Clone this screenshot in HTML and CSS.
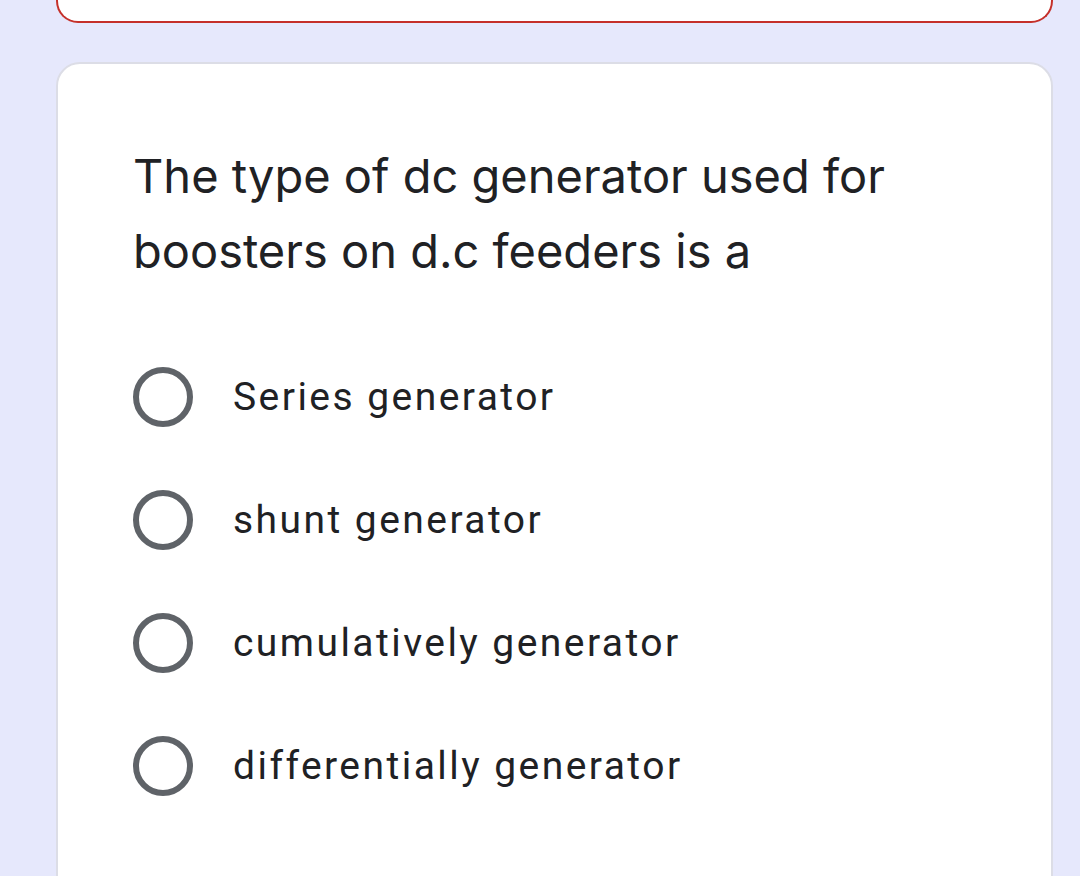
FILE: index.html
```html
<!DOCTYPE html>
<html>
<head>
<meta charset="utf-8">
<link rel="stylesheet" href="styles.css">
</head>
<body>
<div class="page">
  <div class="card card-prev"></div>
  <div class="card card-q">
    <div class="question">The type of dc generator used for boosters on d.c feeders is a</div>
    <div class="options">
      <div class="option"><span class="radio"></span><span class="label">Series generator</span></div>
      <div class="option"><span class="radio"></span><span class="label">shunt generator</span></div>
      <div class="option"><span class="radio"></span><span class="label">cumulatively generator</span></div>
      <div class="option"><span class="radio"></span><span class="label">differentially generator</span></div>
    </div>
  </div>
</div>
</body>
</html>
```
FILE: styles.css
```css
html, body {
  margin: 0;
  padding: 0;
  background: #e6e8fc;
  height: 100%;
  overflow: hidden;
}
.page {
  padding: 0 27px 0 56px;
}
.card {
  background: #fff;
  box-sizing: border-box;
}
.card-prev {
  height: 23px;
  border: 2px solid #c5302a;
  border-top: none;
  border-radius: 0 0 22px 22px;
}
.card-q {
  margin-top: 39px;
  border: 2px solid #dcdde6;
  border-radius: 24px;
  height: 840px;
  padding: 74px 60px 0 75px;
}
.question {
  font-family: Inter, "Noto Sans", sans-serif;
  font-size: 47px;
  line-height: 75px;
  color: #202124;
  width: 820px;
}
.options {
  margin-top: 79px;
  display: flex;
  flex-direction: column;
  gap: 63px;
}
.option {
  display: flex;
  align-items: center;
  gap: 40px;
  height: 60px;
}
.radio {
  width: 60px;
  height: 60px;
  box-sizing: border-box;
  border: 6px solid #5f6368;
  border-radius: 50%;
  flex: none;
}
.label {
  font-family: Roboto, sans-serif;
  font-size: 39px;
  letter-spacing: 2.45px;
  color: #202124;
}
```
